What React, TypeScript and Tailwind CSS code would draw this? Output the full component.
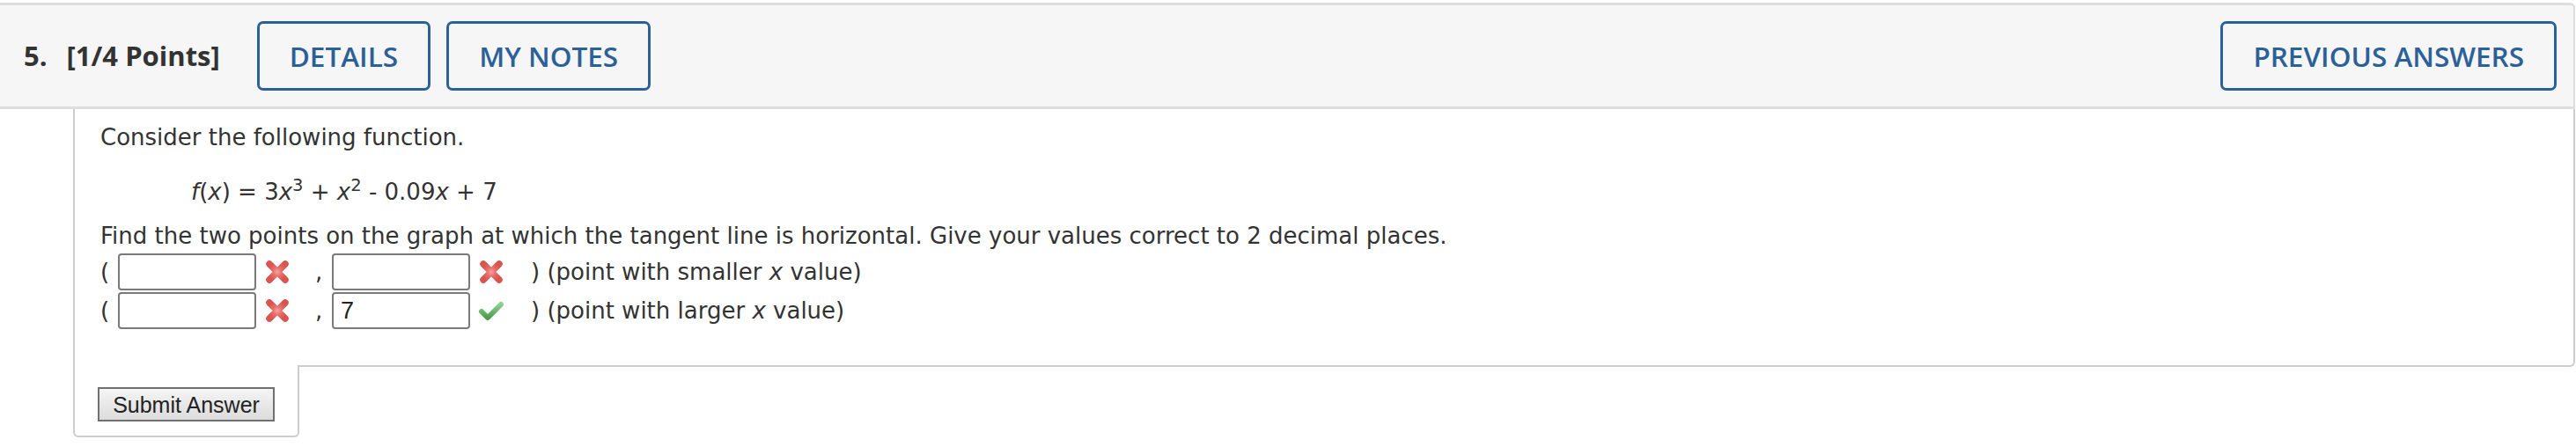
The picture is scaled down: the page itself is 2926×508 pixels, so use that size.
import React from "react";

function RedX() {
  return (
    <svg width="28" height="26" viewBox="0 0 28 26">
      <defs>
        <radialGradient id="rx" cx="50%" cy="50%" r="60%">
          <stop offset="0%" stopColor="#f4a3a1" />
          <stop offset="45%" stopColor="#e8706d" />
          <stop offset="100%" stopColor="#d9534f" />
        </radialGradient>
      </defs>
      <path d="M5 4 L23 22 M23 4 L5 22" stroke="url(#rx)" strokeWidth="7.5" strokeLinecap="round" fill="none" />
    </svg>
  );
}

function GreenCheck() {
  return (
    <svg width="30" height="23" viewBox="0 0 30 23">
      <defs>
        <linearGradient id="gc" x1="0" y1="0" x2="0" y2="1">
          <stop offset="0%" stopColor="#8fd08f" />
          <stop offset="100%" stopColor="#4a9e4a" />
        </linearGradient>
      </defs>
      <path d="M4 12 L11 19 L26 4" stroke="url(#gc)" strokeWidth="6" strokeLinecap="round" strokeLinejoin="round" fill="none" />
    </svg>
  );
}

function Row({ v2, ok2, label }: { v2: string; ok2: boolean; label: React.ReactNode }) {
  return (
    <div className="flex h-[42px] items-center">
      <span className="w-[20px]">(</span>
      <div className="h-[42px] w-[157px] rounded-[4px] border-2 border-[#7a7a7a] bg-white"></div>
      <div className="ml-[10px] flex w-[28px] items-center justify-center">
        <RedX />
      </div>
      <span className="w-[48px] pl-[29px]">,</span>
      <div className="flex h-[42px] w-[157px] items-center rounded-[4px] border-2 border-[#7a7a7a] bg-white pl-[8px] font-['Liberation_Sans',Arial,sans-serif] text-[27px] text-[#222]">
        {v2}
      </div>
      <div className="ml-[9px] flex w-[30px] items-center justify-center">
        {ok2 ? <GreenCheck /> : <RedX />}
      </div>
      <span className="ml-[30px]">{label}</span>
    </div>
  );
}

export default function App() {
  return (
    <div className="min-h-[508px] w-[2926px] bg-white">
      <div className="w-[2925px] pt-[3px]">
        <div className="flex h-[121px] items-center rounded-tr-[6px] border-t-[3px] border-r-2 border-b-[3px] border-[#dedede] bg-[#f6f6f6] pl-[27px] pr-[19px] font-['Open_Sans',sans-serif]">
          <div className="text-[31px] font-bold text-[#333]">
            5.<span className="ml-[22px]">[1/4 Points]</span>
          </div>
          <button className="ml-[42px] h-[79px] rounded-[7px] border-[3px] border-[#2b6196] px-[34px] text-[31.5px] font-semibold text-[#2b6196]">
            DETAILS
          </button>
          <button className="ml-[18px] h-[79px] rounded-[7px] border-[3px] border-[#2b6196] px-[34px] text-[31.5px] font-semibold text-[#2b6196]">
            MY NOTES
          </button>
          <div className="flex-1"></div>
          <button className="h-[79px] rounded-[7px] border-[3px] border-[#2b6196] px-[34px] text-[31.5px] font-semibold text-[#2b6196]">
            PREVIOUS ANSWERS
          </button>
        </div>
        <div className="ml-[83px] rounded-br-[6px] border-r-2 border-b-2 border-l-2 border-[#cccccc] pt-[16px] pb-[41px] pl-[29px] font-['DejaVu_Sans',Verdana,sans-serif] text-[26px] leading-[32px] text-[#333]">
          <div>Consider the following function.</div>
          <div className="mt-[30px] pl-[103px]">
            <i>f</i>(<i>x</i>) = 3<i>x</i>
            <sup>3</sup> + <i>x</i>
            <sup>2</sup> - 0.09<i>x</i> + 7
          </div>
          <div className="mt-[18px]">
            Find the two points on the graph at which the tangent line is horizontal. Give your values correct to 2 decimal places.
          </div>
          <div className="mt-[4px] flex flex-col gap-[2px]">
            <Row v2="" ok2={false} label={<>) (point with smaller <i>x</i> value)</>} />
            <Row v2="7" ok2={true} label={<>) (point with larger <i>x</i> value)</>} />
          </div>
        </div>
        <div className="relative -mt-[2px] ml-[83px] w-[257px] rounded-b-[6px] border-r-2 border-b-2 border-l-2 border-[#cccccc] bg-white pt-[25px] pb-[16px] pl-[26px]">
          <button className="h-[39px] w-[201px] border-2 border-[#707070] bg-gradient-to-b from-[#f5f5f5] to-[#dcdcdc] font-['Liberation_Sans',Arial,sans-serif] text-[25px] text-[#222]">
            Submit Answer
          </button>
        </div>
      </div>
    </div>
  );
}
